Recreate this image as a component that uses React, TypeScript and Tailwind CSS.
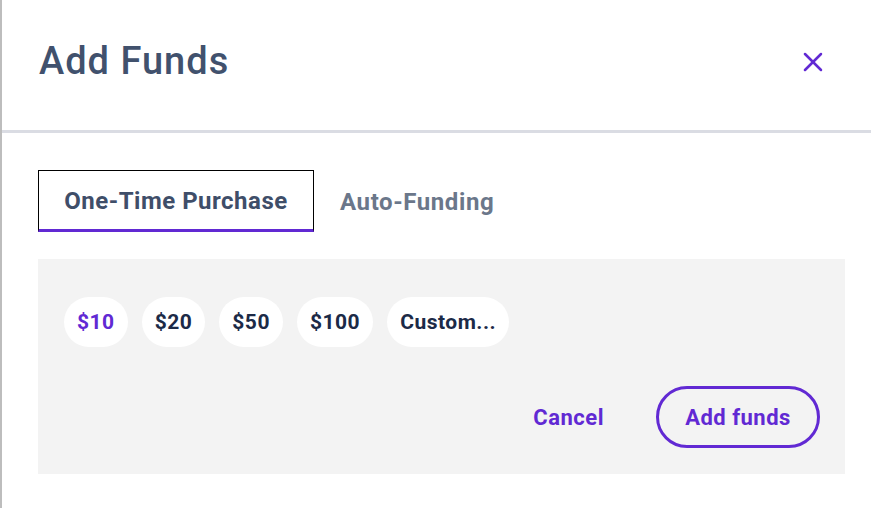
import { X } from "lucide-react";

const amounts = ["$10", "$20", "$50", "$100", "Custom..."];

export default function App() {
  return (
    <div className="h-[508px] w-full border-l-2 border-[#bdbdbd] bg-white font-['Roboto',sans-serif] tracking-[0.5px]">
      {/* Header */}
      <div className="flex h-[133px] items-center justify-between border-b-[3px] border-[#dadce3] pl-[37px] pr-[42px] pb-[7px]">
        <h1 className="text-[38px] font-medium tracking-[1px] text-[#41516d]">Add Funds</h1>
        <button className="text-[#6129d3]">
          <X size={32} strokeWidth={1.9} />
        </button>
      </div>

      {/* Body */}
      <div className="pl-[36px] pr-[26px] pt-[37px]">
        <div className="flex items-stretch">
          <button className="h-[62px] w-[276px] border border-b-[3px] border-black border-b-[#6129d3] pt-[2px] text-[24px] font-bold text-[#3f4e69]">
            One-Time Purchase
          </button>
          <button className="h-[62px] px-[26px] pt-[2px] text-[24px] font-bold tracking-[0.6px] text-[#6b778a]">
            Auto-Funding
          </button>
        </div>

        <div className="mt-[27px] bg-[#f3f3f3] pb-[26px] pl-[26px] pr-[25px] pt-[38px]">
          <div className="flex gap-[14px]">
            {amounts.map((a, i) => (
              <button
                key={a}
                className={`h-[50px] rounded-full bg-white px-[13px] pt-[1px] text-[21px] font-bold ${
                  i === 0 ? "text-[#6129d3]" : "text-[#1c2a47]"
                }`}
              >
                {a}
              </button>
            ))}
          </div>
          <div className="mt-[39px] flex items-center justify-end gap-[52px]">
            <button className="text-[22px] font-bold text-[#6129d3]">Cancel</button>
            <button className="h-[62px] w-[164px] rounded-full border-[3px] border-[#6129d3] text-[22px] font-bold text-[#6129d3]">
              Add funds
            </button>
          </div>
        </div>
      </div>
    </div>
  );
}
